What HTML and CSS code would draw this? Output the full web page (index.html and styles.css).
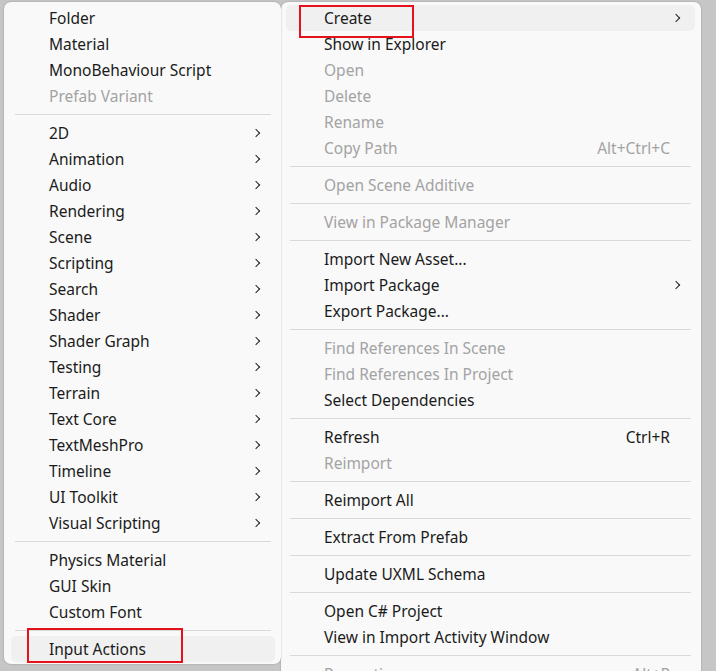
FILE: index.html
```html
<!DOCTYPE html>
<html lang="en">
<head>
    <meta charset="UTF-8">
    <title>Project Context Menu</title>
    <link rel="stylesheet" href="styles.css">
</head>
<body>
    <div class="desk">
        <div class="menu menu-sub">
            <div class="item">Folder</div>
            <div class="item">Material</div>
            <div class="item">MonoBehaviour Script</div>
            <div class="item off">Prefab Variant</div>
            <div class="sep"></div>
            <div class="item sub">2D</div>
            <div class="item sub">Animation</div>
            <div class="item sub">Audio</div>
            <div class="item sub">Rendering</div>
            <div class="item sub">Scene</div>
            <div class="item sub">Scripting</div>
            <div class="item sub">Search</div>
            <div class="item sub">Shader</div>
            <div class="item sub">Shader Graph</div>
            <div class="item sub">Testing</div>
            <div class="item sub">Terrain</div>
            <div class="item sub">Text Core</div>
            <div class="item sub">TextMeshPro</div>
            <div class="item sub">Timeline</div>
            <div class="item sub">UI Toolkit</div>
            <div class="item sub">Visual Scripting</div>
            <div class="sep"></div>
            <div class="item">Physics Material</div>
            <div class="item">GUI Skin</div>
            <div class="item">Custom Font</div>
            <div class="sep"></div>
            <div class="item hot">Input Actions</div>
            <div class="mark mark-input"></div>
        </div>

        <div class="menu menu-main">
            <div class="item sub hot">Create</div>
            <div class="item">Show in Explorer</div>
            <div class="item off">Open</div>
            <div class="item off">Delete</div>
            <div class="item off">Rename</div>
            <div class="item off">Copy Path<span class="key">Alt+Ctrl+C</span></div>
            <div class="sep"></div>
            <div class="item off">Open Scene Additive</div>
            <div class="sep"></div>
            <div class="item off">View in Package Manager</div>
            <div class="sep"></div>
            <div class="item">Import New Asset...</div>
            <div class="item sub">Import Package</div>
            <div class="item">Export Package...</div>
            <div class="sep"></div>
            <div class="item off">Find References In Scene</div>
            <div class="item off">Find References In Project</div>
            <div class="item">Select Dependencies</div>
            <div class="sep"></div>
            <div class="item">Refresh<span class="key">Ctrl+R</span></div>
            <div class="item off">Reimport</div>
            <div class="sep"></div>
            <div class="item">Reimport All</div>
            <div class="sep"></div>
            <div class="item">Extract From Prefab</div>
            <div class="sep"></div>
            <div class="item">Update UXML Schema</div>
            <div class="sep"></div>
            <div class="item">Open C# Project</div>
            <div class="item">View in Import Activity Window</div>
            <div class="sep"></div>
            <div class="item off">Properties...<span class="key">Alt+P</span></div>
            <div class="mark mark-create"></div>
        </div>
    </div>
</body>
</html>
```

FILE: styles.css
```css
html, body {
    margin: 0;
    height: 100%;
    overflow: hidden;
}
body {
    background: #c6c6c6;
    font-family: "Noto Sans", "Open Sans", sans-serif;
    font-size: 15.5px;
    color: #1b1b1b;
}
.desk {
    display: flex;
    align-items: flex-start;
    padding: 2px 0 0 4px;
}
.menu {
    position: relative;
    background: #f9f9f9;
    border-radius: 7px;
    box-shadow: 0 0 2px rgba(0, 0, 0, 0.25);
    padding: 3px 6px 2px 7px;
}
.menu-sub {
    width: 264px;
    z-index: 2;
}
.menu-main {
    width: 409px;
    padding: 3px 6px 2px 5px;
    height: 700px;
}
.item {
    position: relative;
    display: flex;
    align-items: center;
    box-sizing: border-box;
    height: 26px;
    padding: 1px 25px 0 38px;
    border-radius: 5px;
    white-space: nowrap;
    line-height: 25px;
}
.item.hot {
    background: #f0f0f0;
}
.item.off {
    color: #a3a3a3;
}
.item.sub::after {
    content: "";
    position: absolute;
    right: 16px;
    top: 10px;
    width: 5px;
    height: 5px;
    border-top: 1.6px solid #222;
    border-right: 1.6px solid #222;
    transform: rotate(45deg);
}
.key {
    margin-left: auto;
}
.sep {
    height: 1px;
    margin: 5px 4px;
    background: #d9d9d9;
}
.mark {
    position: absolute;
    border: 2px solid #e5121e;
    box-sizing: border-box;
}
.mark-create {
    left: 18px;
    top: 3px;
    width: 115px;
    height: 33px;
}
.mark-input {
    left: 23px;
    top: 626px;
    width: 156px;
    height: 35px;
}
```
